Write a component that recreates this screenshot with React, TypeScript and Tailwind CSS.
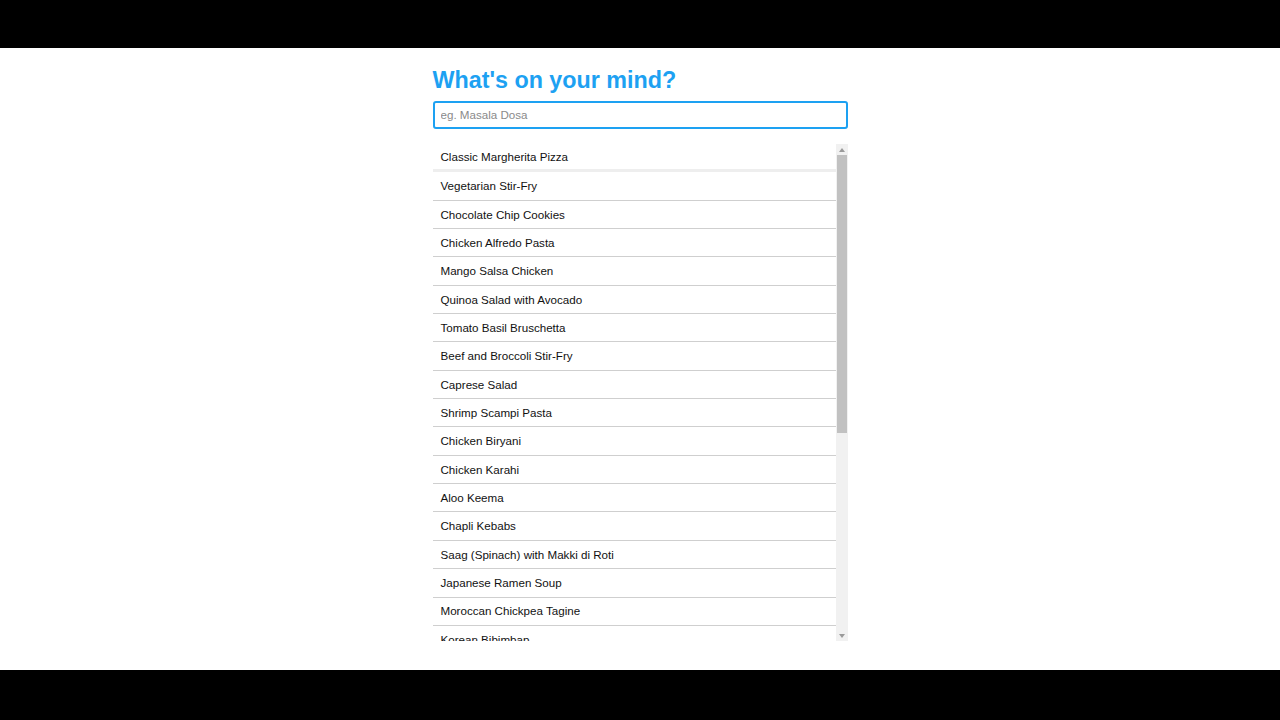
import React from "react";

const dishes = [
  "Classic Margherita Pizza",
  "Vegetarian Stir-Fry",
  "Chocolate Chip Cookies",
  "Chicken Alfredo Pasta",
  "Mango Salsa Chicken",
  "Quinoa Salad with Avocado",
  "Tomato Basil Bruschetta",
  "Beef and Broccoli Stir-Fry",
  "Caprese Salad",
  "Shrimp Scampi Pasta",
  "Chicken Biryani",
  "Chicken Karahi",
  "Aloo Keema",
  "Chapli Kebabs",
  "Saag (Spinach) with Makki di Roti",
  "Japanese Ramen Soup",
  "Moroccan Chickpea Tagine",
  "Korean Bibimbap",
  "Greek Moussaka",
  "Thai Green Curry",
  "Mexican Street Tacos",
  "Spanish Paella",
  "French Ratatouille",
  "Indian Butter Chicken",
  "Italian Tiramisu",
  "Lebanese Falafel Wrap",
  "Brazilian Feijoada",
  "Vietnamese Pho",
  "Turkish Kebab Platter",
  "Russian Borscht",
];

const Arrow = ({ down }: { down?: boolean }) => (
  <div className="h-[11px] flex items-center justify-center">
    <svg width="6" height="4" viewBox="0 0 6 4">
      <path d={down ? "M0 0 L6 0 L3 4 Z" : "M0 4 L6 4 L3 0 Z"} fill="#9a9a9a" />
    </svg>
  </div>
);

export default function App() {
  return (
    <div className="flex flex-col w-[1280px] h-[720px] bg-black font-['Liberation_Sans',Arial,sans-serif]">
      <div className="h-[48px] bg-black" />
      <div className="h-[622px] bg-white flex justify-center">
        <div className="w-[415px] pt-[19px] flex flex-col">
          <h1 className="text-[23.3px] font-bold text-[#1da1f2] leading-[27px] h-[34px]">
            What's on your mind?
          </h1>
          <input
            type="text"
            placeholder="eg. Masala Dosa"
            className="h-[28px] w-full rounded-[3px] border-2 border-[#1da1f2] px-[6px] pb-[2px] text-[11.6px] text-black outline-none placeholder:text-[#8a8a8a]"
          />
          <div className="mt-[15px] h-[497px] flex">
            <ul className="flex-1 overflow-hidden">
              {dishes.map((d, i) => (
                <li
                  key={d}
                  className={
                    i === 0
                      ? "h-[28.35px] flex items-center px-[8px] text-[11.6px] text-[#111] border-b-[3px] border-[#eeeeee]"
                      : "h-[28.35px] flex items-center px-[8px] text-[11.6px] text-[#111] border-b border-[#cfcfcf]"
                  }
                >
                  {d}
                </li>
              ))}
            </ul>
            <div className="w-[12px] bg-[#f1f1f1] flex flex-col">
              <Arrow />
              <div className="mx-[1px] h-[278px] bg-[#c1c1c1]" />
              <div className="flex-1" />
              <Arrow down />
            </div>
          </div>
        </div>
      </div>
      <div className="flex-1 bg-black" />
    </div>
  );
}
